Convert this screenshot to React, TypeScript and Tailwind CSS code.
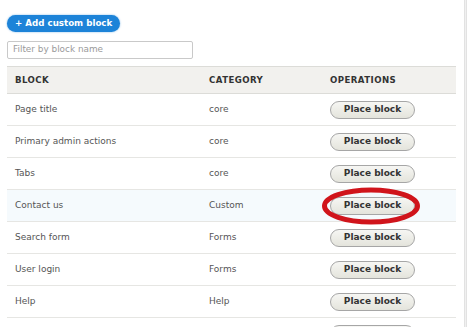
import React from 'react';

const rows = [
  { name: 'Page title', category: 'core' },
  { name: 'Primary admin actions', category: 'core' },
  { name: 'Tabs', category: 'core' },
  { name: 'Contact us', category: 'Custom', highlight: true },
  { name: 'Search form', category: 'Forms' },
  { name: 'User login', category: 'Forms' },
  { name: 'Help', category: 'Help' },
  { name: '', category: '' },
];

function PlaceButton() {
  return (
    <button className="flex items-center justify-center w-[85px] h-[18px] rounded-full border border-[#a6a6a6] bg-gradient-to-b from-[#f6f6f3] to-[#e4e4dc] text-[9px] font-bold text-[#333] leading-none">
      Place block
    </button>
  );
}

export default function App() {
  return (
    <div className="w-[474px] h-[327px] overflow-hidden bg-white flex font-['DejaVu_Sans',sans-serif] text-[#555]">
      <div className="flex-1 pl-[7px] pr-[8px] pt-[15px] flex flex-col items-start">
        <button className="shrink-0 flex items-center h-[17px] px-[8px] rounded-full bg-[#1d83d8] text-white text-[8.7px] font-bold leading-none shadow-[0_0_2px_rgba(29,131,216,0.6)]">
          + Add custom block
        </button>
        <div className="shrink-0 mt-[9px] w-[186px] h-[18px] border border-[#c9c9c9] rounded-[2px] flex items-center px-[5px] text-[8.9px] text-[#9a9a9a]">
          Filter by block name
        </div>
        <div className="shrink-0 mt-[7px] w-full">
          <div className="flex items-center h-[28px] bg-[#f2f1ee] border-y border-[#dcdcd8] text-[8.6px] font-bold tracking-[0.05em] text-[#333]">
            <div className="w-[194px] pl-[8px]">BLOCK</div>
            <div className="w-[121px] pl-[8px]">CATEGORY</div>
            <div className="pl-[8px]">OPERATIONS</div>
          </div>
          {rows.map((r, i) => (
            <div key={i} className={`flex items-center h-[32px] border-b border-[#e6e6e3] text-[9px] ${r.highlight ? 'bg-[#f5fafd]' : ''}`}>
              <div className="w-[194px] pl-[8px]">{r.name}</div>
              <div className="w-[121px] pl-[8px]">{r.category}</div>
              <div className="pl-[8px] relative">
                <PlaceButton />
                {r.highlight && (
                  <svg className="absolute left-[-1px] top-[-10px] pointer-events-none" width="100" height="38" viewBox="0 0 100 38">
                    <ellipse cx="50" cy="19" rx="46.5" ry="16" fill="none" stroke="#d0141b" strokeWidth="5" />
                  </svg>
                )}
              </div>
            </div>
          ))}
        </div>
      </div>
      <div className="w-[3px] mr-[7px] bg-[#f0f0f0] border-x border-[#e2e2e2]" />
    </div>
  );
}
